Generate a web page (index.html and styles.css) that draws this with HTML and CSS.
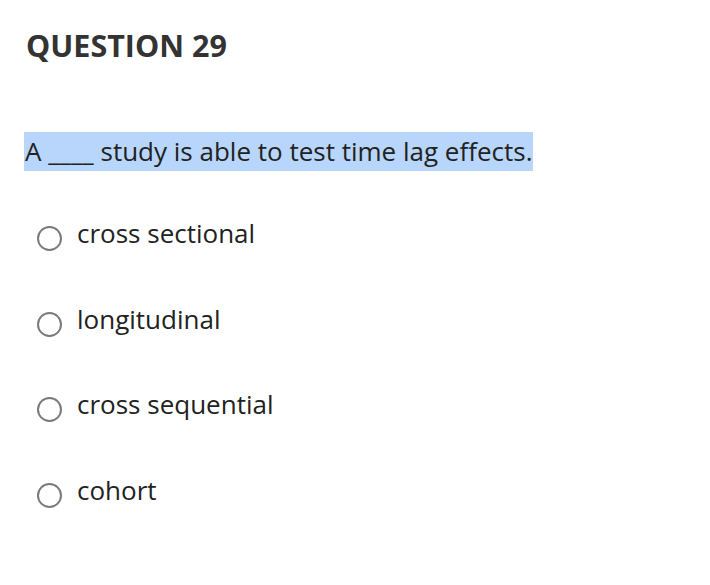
FILE: index.html
```html
<!DOCTYPE html>
<html>
<head>
<meta charset="utf-8">
<link rel="stylesheet" href="styles.css">
</head>
<body>
<div class="page">
  <h1 class="title">QUESTION 29</h1>
  <p class="question"><span class="hl">A ____ study is able to test time lag effects.</span></p>
  <ul class="options">
    <li class="option"><span class="radio"></span><span class="label">cross sectional</span></li>
    <li class="option"><span class="radio"></span><span class="label">longitudinal</span></li>
    <li class="option"><span class="radio"></span><span class="label">cross sequential</span></li>
    <li class="option"><span class="radio"></span><span class="label">cohort</span></li>
  </ul>
</div>
</body>
</html>
```
FILE: styles.css
```css
html, body {
  margin: 0;
  padding: 0;
  background: #fff;
}
body {
  font-family: "Open Sans", "DejaVu Sans", sans-serif;
  color: #222;
}
.page {
  padding: 24px 0 0 25px;
}
.title {
  margin: 0;
  font-size: 30.5px;
  font-weight: 700;
  color: #333;
  line-height: 42px;
  padding-left: 1px;
}
.question {
  margin: 66px 0 0 0;
  font-size: 26px;
  line-height: 39px;
}
.hl {
  background: #b8d6fb;
  display: inline-block;
  padding-right: 1px;
  margin-left: -1px;
  padding-left: 1px;
}
.options {
  list-style: none;
  margin: 45px 0 0 0;
  padding: 0 0 0 12px;
  display: flex;
  flex-direction: column;
  gap: 50.5px;
}
.option {
  display: flex;
  align-items: center;
  gap: 15px;
  font-size: 26px;
  line-height: 35px;
}
.radio {
  width: 21px;
  height: 21px;
  border: 2px solid #7a7a7a;
  border-radius: 50%;
  box-sizing: content-box;
  flex: none;
  margin-top: 10px;
}
```
